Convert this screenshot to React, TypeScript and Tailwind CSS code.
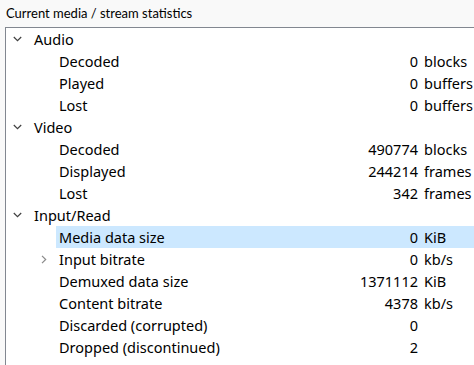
import React from "react";

type Child = { label: string; value: string; unit: string; selected?: boolean; expander?: boolean };
type Group = { name: string; children: Child[] };

const groups: Group[] = [
  {
    name: "Audio",
    children: [
      { label: "Decoded", value: "0", unit: "blocks" },
      { label: "Played", value: "0", unit: "buffers" },
      { label: "Lost", value: "0", unit: "buffers" },
    ],
  },
  {
    name: "Video",
    children: [
      { label: "Decoded", value: "490774", unit: "blocks" },
      { label: "Displayed", value: "244214", unit: "frames" },
      { label: "Lost", value: "342", unit: "frames" },
    ],
  },
  {
    name: "Input/Read",
    children: [
      { label: "Media data size", value: "0", unit: "KiB", selected: true },
      { label: "Input bitrate", value: "0", unit: "kb/s", expander: true },
      { label: "Demuxed data size", value: "1371112", unit: "KiB" },
      { label: "Content bitrate", value: "4378", unit: "kb/s" },
      { label: "Discarded (corrupted)", value: "0", unit: "" },
      { label: "Dropped (discontinued)", value: "2", unit: "" },
    ],
  },
];

function ChevronDown() {
  return (
    <svg width="9" height="6" viewBox="0 0 9 6" className="shrink-0">
      <path d="M0.8 1 L4.5 4.7 L8.2 1" fill="none" stroke="#404040" strokeWidth="1.2" />
    </svg>
  );
}

function ChevronRight() {
  return (
    <svg width="6" height="9" viewBox="0 0 6 9" className="shrink-0">
      <path d="M1 0.8 L4.7 4.5 L1 8.2" fill="none" stroke="#8a8a8a" strokeWidth="1.2" />
    </svg>
  );
}

export default function App() {
  return (
    <div
      className="w-[474px] h-[365px] overflow-hidden bg-[#f9f9f9] text-black"
      style={{ fontFamily: '"Noto Sans", "Open Sans", sans-serif' }}
    >
      <div
        className="h-[27px] flex items-center pl-[6px] text-[13px] leading-none"
        style={{ fontFamily: 'Lato, "Noto Sans", sans-serif' }}
      >
        Current media / stream statistics
      </div>
      <div className="ml-[5px] w-[469px] h-[400px] bg-white border-l border-t border-[#828790] text-[14.5px] leading-none">
        {groups.map((g) => (
          <div key={g.name}>
            <div className="h-[22px] flex items-center">
              <div className="w-[28px] flex items-center pl-[7px]">
                <ChevronDown />
              </div>
              <span>{g.name}</span>
            </div>
            {g.children.map((c) => (
              <div key={c.label} className="h-[22px] flex items-stretch">
                <div className="w-[50px] flex items-center pl-[35px]">
                  {c.expander ? <ChevronRight /> : null}
                </div>
                <div
                  className={
                    "flex-1 flex items-center pl-[3px] " + (c.selected ? "bg-[#cce8ff]" : "")
                  }
                >
                  <span className="flex-1">{c.label}</span>
                  <span className="text-right">{c.value}</span>
                  <span className="w-[56px] pl-[6px] whitespace-nowrap">{c.unit}</span>
                </div>
              </div>
            ))}
          </div>
        ))}
      </div>
    </div>
  );
}
